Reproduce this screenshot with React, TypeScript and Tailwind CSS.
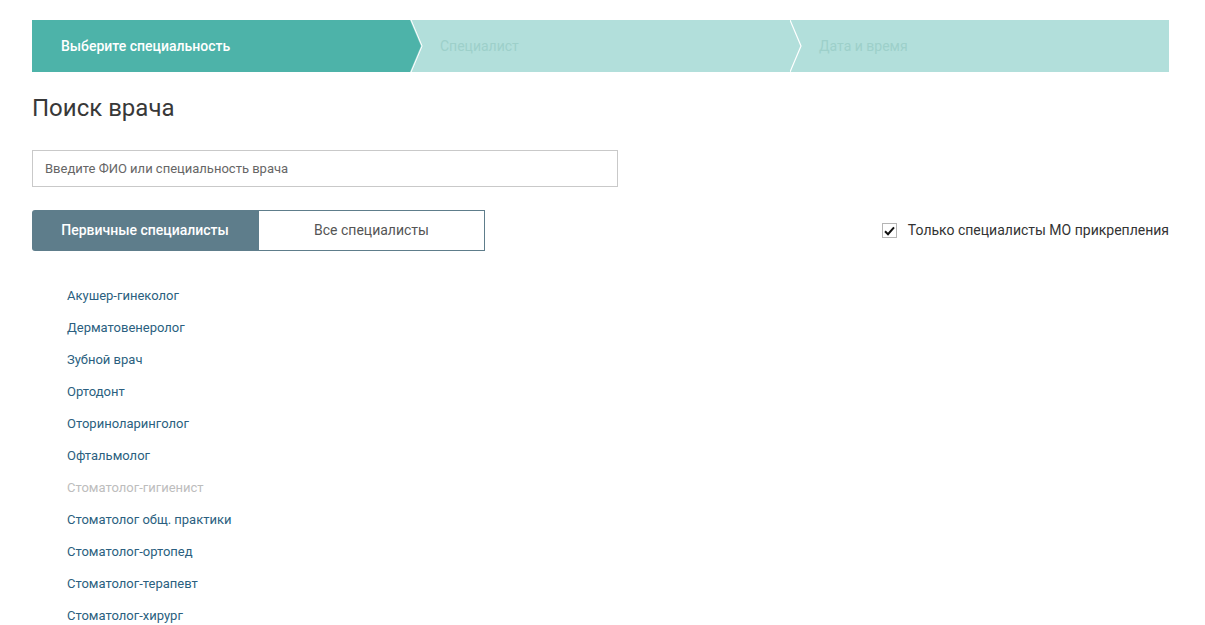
import React from "react";

const items: { name: string; disabled?: boolean }[] = [
  { name: "Акушер-гинеколог" },
  { name: "Дерматовенеролог" },
  { name: "Зубной врач" },
  { name: "Ортодонт" },
  { name: "Оториноларинголог" },
  { name: "Офтальмолог" },
  { name: "Стоматолог-гигиенист", disabled: true },
  { name: "Стоматолог общ. практики" },
  { name: "Стоматолог-ортопед" },
  { name: "Стоматолог-терапевт" },
  { name: "Стоматолог-хирург" },
];

export default function App() {
  return (
    <div
      className="min-h-[625px] w-[1205px] bg-white"
      style={{ fontFamily: "Roboto, 'Noto Sans', Arial, sans-serif" }}
    >
      <div className="ml-[32px] w-[1137px] pt-[20px]">
        {/* Steps */}
        <div className="grid h-[52px] grid-cols-[378px_380px_379px] bg-[#b2dfdb]">
          <div className="relative flex items-center bg-[#4db3a9] pl-[29px] pt-[1px]">
            <span className="text-[14px] font-medium text-white">Выберите специальность</span>
            <svg
              className="absolute left-full top-0 z-10"
              width="14"
              height="52"
              viewBox="0 0 14 52"
            >
              <polygon points="0,0 11,26 0,52" fill="#4db3a9" />
              <polyline points="0.5,0 11.5,26 0.5,52" fill="none" stroke="#ffffff" strokeWidth="1" transform="translate(0.6,0)" />
            </svg>
          </div>
          <div className="relative flex items-center pl-[30px] pt-[1px]">
            <span className="text-[14px] text-[#9dd0ca]">Специалист</span>
            <svg
              className="absolute left-full top-0 z-10"
              width="14"
              height="52"
              viewBox="0 0 14 52"
            >
              <polyline points="0,0 11,26 0,52" fill="none" stroke="#ffffff" strokeWidth="1.2" />
            </svg>
          </div>
          <div className="flex items-center pl-[29px] pt-[1px]">
            <span className="text-[14px] text-[#9dd0ca]">Дата и время</span>
          </div>
        </div>

        {/* Title */}
        <h1 className="mt-[22px] text-[24px] font-normal leading-[28px] text-[#383838]">Поиск врача</h1>

        {/* Search input */}
        <div className="mt-[28px] flex h-[37px] w-[586px] items-center border border-[#c9c9c9] pl-[12px]">
          <span className="text-[13px] text-[#666666]">Введите ФИО или специальность врача</span>
        </div>

        {/* Tabs + checkbox */}
        <div className="mt-[23px] flex items-center justify-between">
          <div className="flex h-[41px]">
            <div className="flex w-[226px] items-center justify-center rounded-l-[3px] bg-[#5e7d8b] text-[14px] font-medium text-white">
              Первичные специалисты
            </div>
            <div className="flex w-[227px] items-center justify-center border border-[#5e7d8b] text-[14px] text-[#555555]">
              Все специалисты
            </div>
          </div>
          <div className="flex items-center gap-[11px] pr-0">
            <div className="flex h-[15px] w-[15px] items-center justify-center border border-[#b5b5b5] bg-white">
              <svg width="11" height="10" viewBox="0 0 11 10">
                <path d="M1 5.2 L4 8.2 L10 1.3" fill="none" stroke="#111111" strokeWidth="2" />
              </svg>
            </div>
            <span className="text-[14px] text-[#333333]">Только специалисты МО прикрепления</span>
          </div>
        </div>

        {/* List */}
        <ul className="mt-[29px] pl-[35px]">
          {items.map((it) => (
            <li
              key={it.name}
              className={`text-[13px] leading-[32px] ${it.disabled ? "text-[#bdbdbd]" : "text-[#2b5f80]"}`}
            >
              {it.name}
            </li>
          ))}
        </ul>
      </div>
    </div>
  );
}
